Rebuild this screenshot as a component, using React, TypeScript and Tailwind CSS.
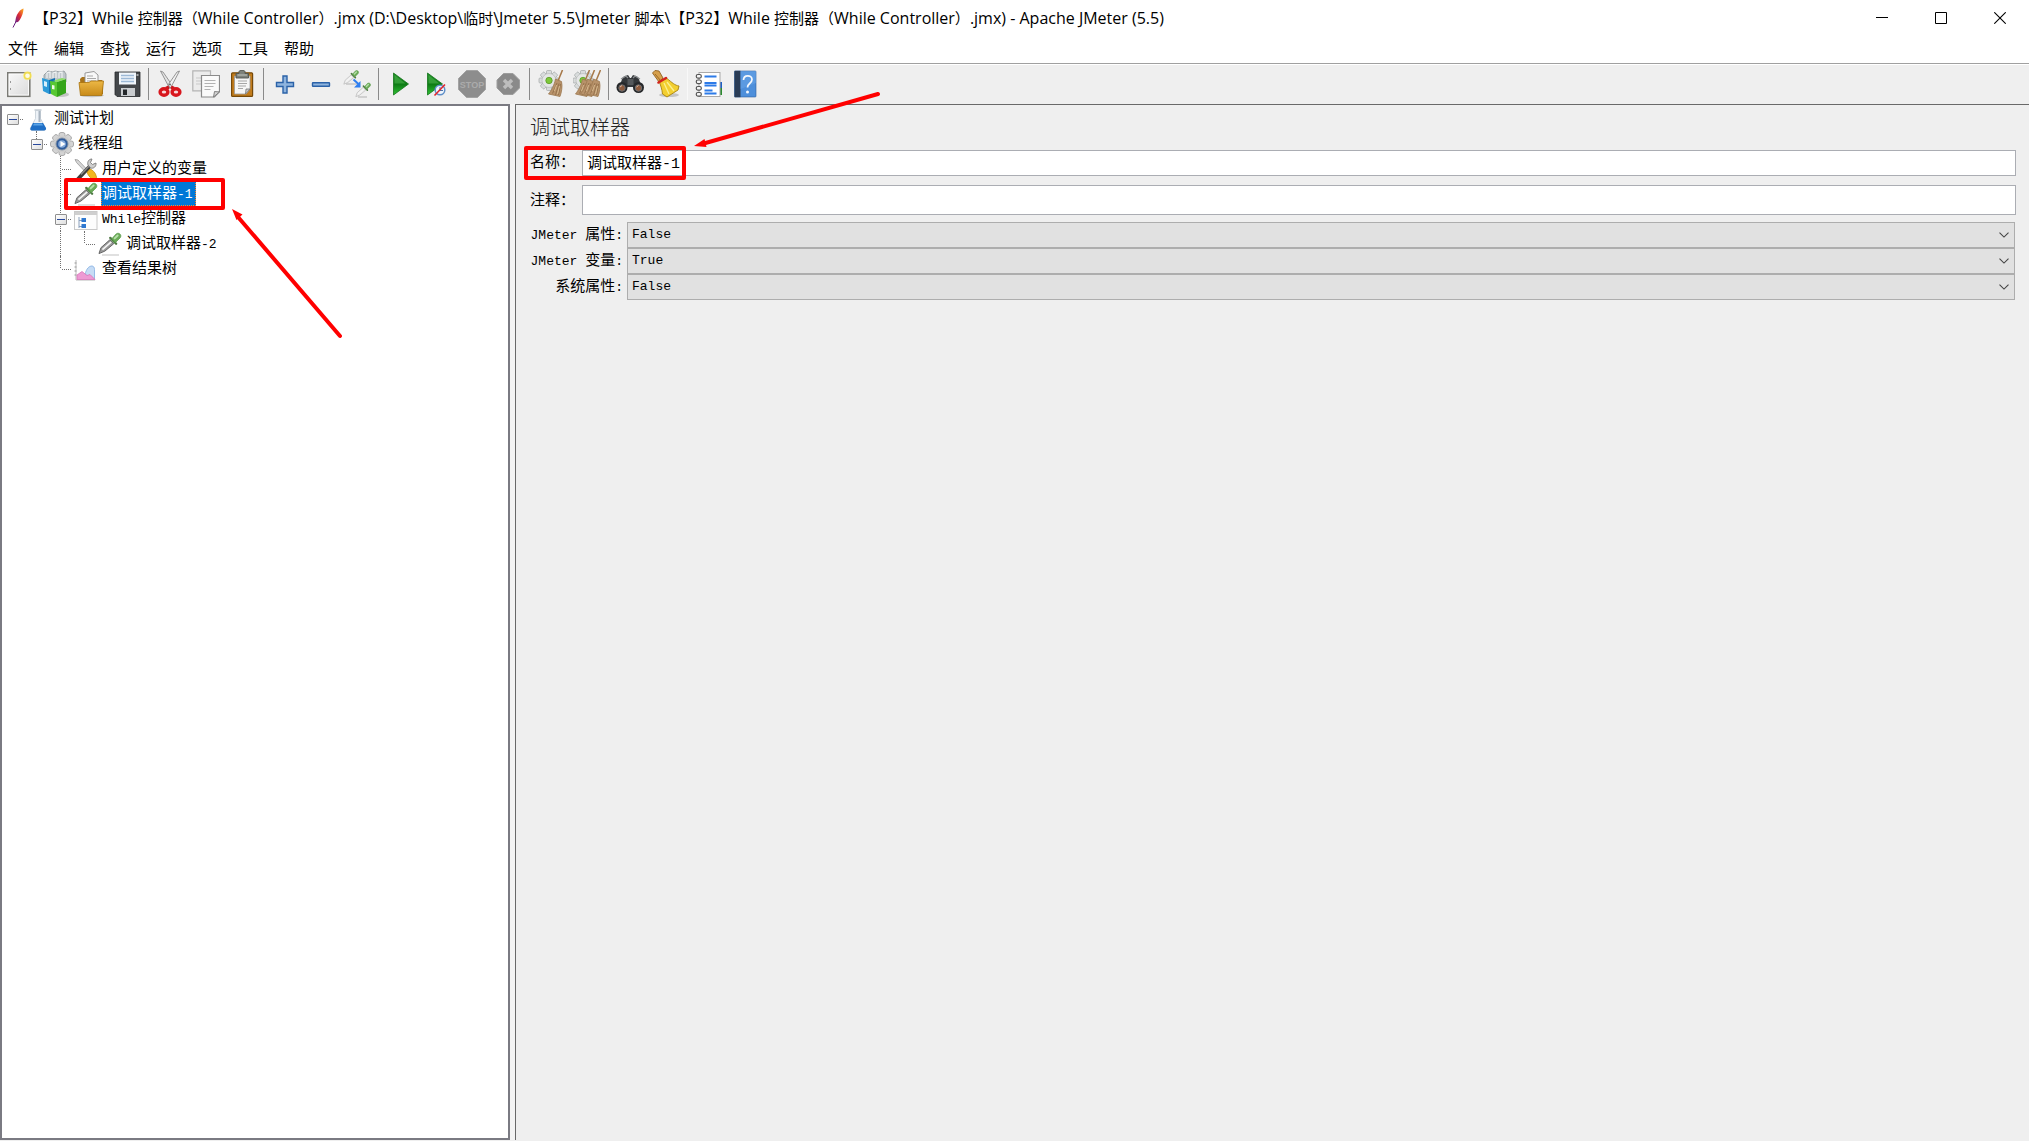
import { useState } from "react";
import type { ReactNode } from "react";

const UI_FONT = "font-['Open_Sans','Noto_Sans_CJK_SC',sans-serif]";
const SONG_FONT = "font-['Liberation_Mono','Noto_Sans_CJK_SC',monospace]";

/* Sets the half-width characters of a mixed string in a size of their own. */
function Mixed({ text, latin = "text-[13px]" }: { text: string; latin?: string }) {
  const parts = text.match(/[\x20-\x7e]+|[^\x20-\x7e]+/g) ?? [];
  return (
    <>
      {parts.map((p, i) =>
        /^[\x20-\x7e]/.test(p) ? (
          <span key={i} className={latin}>
            {p}
          </span>
        ) : (
          <span key={i}>{p}</span>
        ),
      )}
    </>
  );
}

function Icon({ children }: { children: ReactNode }) {
  return (
    <svg viewBox="0 0 28 28" className="size-7 shrink-0" aria-hidden="true">
      {children}
    </svg>
  );
}

const NewIcon = () => (
  <Icon>
    <rect x="2.8" y="2.8" width="22" height="23.5" fill="#e9e9e9" stroke="#7b7b76" strokeWidth="1.6" />
    <rect x="4" y="4" width="19.5" height="21" fill="url(#paper)" stroke="#fff" strokeWidth="0.8" />
    <path d="M5.5 11v2M5.5 18v2" stroke="#999" />
    <circle cx="22.5" cy="5.7" r="4.6" fill="#fbf3a0" opacity="0.55" />
    <circle cx="22.5" cy="5.7" r="3.1" fill="#fdfbe6" stroke="#f0dc50" strokeWidth="1.6" />
  </Icon>
);

const TemplatesIcon = () => (
  <Icon>
    <ellipse cx="20" cy="24.5" rx="8" ry="2.6" fill="#9a9a9a" opacity="0.5" />
    <path d="M3 5l4-4 5 1 2-1 5 1 4-1 2 3v8H3z" fill="#bfc6ca" stroke="#8b9499" strokeWidth="0.8" />
    <path d="M6 8V3l3-1v6M12 8V3l3-1v6M18 8V3l3-1v6" fill="none" stroke="#eef1f2" strokeWidth="1.2" />
    <path d="M1 8l7 2v14l-6-3z" fill="#2c9ad8" />
    <path d="M8 10l6-2v15l-6 1z" fill="#1170b4" />
    <path d="M3 11l3 1v5l-3-1z" fill="#d7effb" />
    <path d="M9 11l7 1v15l-6-3z" fill="#58c832" />
    <path d="M16 12l9-3v14l-9 4z" fill="#35a51a" />
    <path d="M16 12l9-3-4-1-9 3z" fill="#8be063" />
    <path d="M11 15l2.5.6v4L11 19z" fill="#f2fbe9" />
  </Icon>
);

const OpenIcon = () => (
  <Icon>
    <ellipse cx="15" cy="25.6" rx="12" ry="1.6" fill="#999" opacity="0.5" />
    <path d="M3 9l2-2h7l2 3h11l1 2v12H4z" fill="#a9741a" />
    <path d="M8 3l9-1.5 4 3.5v10H8z" fill="#f8f8f8" stroke="#8e8e8e" strokeWidth="0.9" />
    <path d="M10 6h6M10 8.5h9M10 11h9" stroke="#a9a9a9" />
    <path d="M2 12.5h10l2-1.5h12.500l-1.500 14.500H3.500z" fill="url(#gold)" stroke="#a8720c" strokeWidth="0.8" />
  </Icon>
);

const SaveIcon = () => (
  <Icon>
    <path d="M2 2h25v24.5H4L2 24.5z" fill="#44474a" stroke="#27292b" strokeWidth="0.8" />
    <rect x="6" y="2.5" width="17" height="12" fill="#f1f6fb" />
    <path d="M8 5.5h13M8 8.5h13M8 11.5h13" stroke="#9db9d6" strokeWidth="1.3" />
    <rect x="8" y="18" width="14" height="8" fill="#c9cccf" />
    <rect x="10" y="19.5" width="4" height="5.5" fill="#24272a" />
    <rect x="23.5" y="4" width="2" height="2" fill="#a4a7aa" />
  </Icon>
);

const CutIcon = () => (
  <Icon>
    <path d="M4.5 1L7 2l9 13-2.500 3z" fill="#e4e4e4" stroke="#8a8a8a" strokeWidth="0.9" />
    <path d="M23.500 1L21 2l-9 13 2.500 3z" fill="#f1f1f1" stroke="#8a8a8a" strokeWidth="0.9" />
    <circle cx="14" cy="14.5" r="1" fill="#666" />
    <path d="M13 17l-3 1.500M15 17l3 1.500" stroke="#c9171d" strokeWidth="3.500" />
    <ellipse cx="8" cy="22" rx="3.900" ry="3.200" fill="#f7d9da" stroke="#d8161d" strokeWidth="3.400" />
    <ellipse cx="20" cy="22" rx="3.900" ry="3.200" fill="#f7d9da" stroke="#d8161d" strokeWidth="3.400" />
  </Icon>
);

const CopyIcon = () => (
  <Icon>
    <path d="M.800.800h17.700v20H.800z" fill="#ececec" stroke="#b4b4b4" strokeWidth="1.2" />
    <path d="M4 8h5M4 11h5M4 14h5" stroke="#c9c9c9" />
    <path d="M9.500 5.500h18v16l-5 5.500h-13z" fill="#fafafa" stroke="#8a8a8a" strokeWidth="1.2" />
    <path d="M12.500 10.500h11M12.500 13.500h11M12.500 16.500h9M12.500 19.500h6" stroke="#b2b2b2" strokeWidth="1.2" />
    <path d="M21.500 27l1-5.500 5 .5z" fill="#d4d4d4" stroke="#777" strokeWidth="0.9" />
  </Icon>
);

const PasteIcon = () => (
  <Icon>
    <rect x="3.600" y="2.800" width="21" height="23.600" rx="1" fill="#c27c1c" stroke="#75490a" strokeWidth="1.2" />
    <path d="M6.500 6h15.500v13l-4 5H6.500z" fill="#f6f6f6" stroke="#9a9a9a" strokeWidth="0.8" />
    <path d="M10 11h9M10 13.500h9M10 16h8M10 18.500h5" stroke="#a6a6a6" strokeWidth="1.1" />
    <path d="M17.500 24l.5-5h4z" fill="#c9c9c9" stroke="#777" strokeWidth="0.8" />
    <path d="M8 3.500h3V1.500c0-1.500 6-1.500 6 0v2h3.500V8H8z" fill="#7d817b" stroke="#50534e" strokeWidth="0.9" />
    <path d="M9.500 5h9.500" stroke="#c2c5c0" />
  </Icon>
);

const PlusIcon = () => (
  <Icon>
    <path d="M12 6h4v6.500h6.500v4H16V23h-4v-6.500H5.500v-4H12z" fill="#8fb4de" stroke="#2b62a8" strokeWidth="1.4" />
  </Icon>
);

const MinusIcon = () => (
  <Icon>
    <rect x="5.500" y="12.700" width="17" height="3.600" rx="0.5" fill="#8fb4de" stroke="#2b62a8" strokeWidth="1.4" />
  </Icon>
);

type DropperProps = { x?: number; y?: number; s?: number; tube?: string; edge?: string };

function Dropper({ x = 0, y = 0, s = 1, tube = "#dcdcdc", edge = "#8b8b8b" }: DropperProps) {
  return (
    <g transform={`translate(${x} ${y}) scale(${s})`}>
      <path d="M.5 21.500L2.500 15.500 11.500 7.500l4 4L6.500 19z" fill={tube} stroke={edge} strokeWidth="1" />
      <path d="M4 17.500l9-8" stroke="#f4f4f4" strokeWidth="1.800" />
      <path d="M12 5.500l6 6" stroke="#4f7a44" strokeWidth="2.400" strokeLinecap="round" />
      <path d="M13.500 6.500l4.500-5c2.500-2.200 6.500 1 4 4L17 10.500z" fill="#6bab58" stroke="#5b9a4b" strokeWidth="0.8" />
      <path d="M16.500 6l3-3" stroke="#b5dfa8" strokeWidth="2" strokeLinecap="round" />
    </g>
  );
}

const ToggleIcon = () => (
  <Icon>
    <path d="M3 14h11M15 27h9" stroke="#c6c6c6" strokeWidth="1.5" />
    <Dropper x={0.500} y={0} s={0.66} tube="#ececec" edge="#b5b5b5" />
    <Dropper x={12.500} y={12.500} s={0.66} tube="#ececec" edge="#b5b5b5" />
    <path d="M10.500 9.500l5 4.500" stroke="#2f7ff0" strokeWidth="2" />
    <path d="M17.500 11v6.500H11z" fill="#2f7ff0" />
  </Icon>
);

const StartIcon = () => (
  <Icon>
    <path d="M7.500 3L22.500 14 7.500 25z" fill="url(#play)" stroke="#14751a" strokeWidth="0.8" />
    <path d="M8.500 5l11 8.500h-11z" fill="#5dc35d" opacity="0.45" />
  </Icon>
);

const StartNoPauseIcon = () => (
  <Icon>
    <path d="M5.500 3L20.500 14 5.500 25z" fill="url(#play)" stroke="#14751a" strokeWidth="0.8" />
    <path d="M6.500 5l11 8.500h-11z" fill="#5dc35d" opacity="0.45" />
    <circle cx="18" cy="20" r="4.800" fill="#eef4fb" stroke="#5f8fc8" strokeWidth="1.5" />
    <path d="M18 17v3.500h3" fill="none" stroke="#4775ad" />
    <path d="M12.500 25.500L23 14.500" stroke="#e0262c" strokeWidth="1.6" />
  </Icon>
);

const StopIcon = () => (
  <Icon>
    <path d="M8.500.5h11l8 8v11l-8 8h-11l-8-8v-11z" fill="#8d8d8d" stroke="#a3a3a3" />
    <text x="14" y="17.500" textAnchor="middle" fontSize="9" fontWeight="700" fontFamily="Liberation Sans, sans-serif" fill="#ababab">
      STOP
    </text>
  </Icon>
);

const ShutdownIcon = () => (
  <Icon>
    <path d="M9.500 3.500h9.500l6.500 6.500v8L19 24.500H9.500L3 18v-8z" fill="#8a8a8a" stroke="#9d9d9d" />
    <path d="M10 10l8 8M18 10l-8 8" stroke="#bdbdbd" strokeWidth="3.400" />
  </Icon>
);

const GEAR_TEETH = [0, 45, 90, 135, 180, 225, 270, 315];

const Gear = ({ cx, cy }: { cx: number; cy: number }) => (
  <g>
    {GEAR_TEETH.map((a) => (
      <rect
        key={a}
        x={cx - 2.500}
        y={cy - 10}
        width="5"
        height="5"
        rx="1"
        fill="#d9dcdc"
        stroke="#a3a8a8"
        strokeWidth="0.7"
        transform={`rotate(${a} ${cx} ${cy})`}
      />
    ))}
    <circle cx={cx} cy={cy} r="7" fill="#e4e6e6" stroke="#b2b6b6" strokeWidth="0.6" />
    <circle cx={cx} cy={cy} r="3.200" fill="#7dc83a" stroke="#5a9a26" strokeWidth="0.8" />
  </g>
);

const Broom = ({ x }: { x: number }) => (
  <g transform={`translate(${x} 0)`}>
    <path d="M12.500 0L8 11" stroke="#a67848" strokeWidth="1.5" />
    <path d="M5.500 9l6 2.500c1.200 5 0 11-1.500 15L-1.500 24c3-4 5.500-8 7-15z" fill="#b8926a" stroke="#9c7850" strokeWidth="0.8" />
    <path d="M7 13L2.500 23.500M9 13.500L5.500 25M10.500 14L8.500 25" stroke="#8d6b45" strokeWidth="0.8" />
    <path d="M6.500 15l-2 6M9.500 16l-2 8" stroke="#dcbf95" strokeWidth="0.9" />
  </g>
);

const ClearIcon = () => (
  <Icon>
    <Gear cx={12} cy={10.500} />
    <Broom x={13} />
  </Icon>
);

const ClearAllIcon = () => (
  <Icon>
    <Gear cx={10} cy={10.500} />
    <Broom x={4} />
    <Broom x={9} />
    <Broom x={15} />
  </Icon>
);

const SearchIcon = () => (
  <Icon>
    <path d="M7 7l5-2 2 3h1l2-3 5 2 4 10H3z" fill="#333639" />
    <path d="M5 9l5-3 2 2M24 9l-5-3-2 2" stroke="#8a8d90" strokeWidth="1.2" fill="none" />
    <rect x="11.500" y="9" width="6" height="6" fill="#55585b" />
    <circle cx="6" cy="17.500" r="5.500" fill="#26282a" />
    <circle cx="22.500" cy="17.500" r="5.500" fill="#26282a" />
    <circle cx="6" cy="18" r="3.200" fill="#8d5a3c" stroke="#6d7074" />
    <circle cx="22.500" cy="18" r="3.200" fill="#8d5a3c" stroke="#6d7074" />
    <path d="M4 17l2-1.500M20.500 17l2-1.500" stroke="#e0b79c" />
  </Icon>
);

const ResetSearchIcon = () => (
  <Icon>
    <ellipse cx="17" cy="25" rx="10" ry="2" fill="#999" opacity="0.5" />
    <path d="M.5 3L3 .5 7 1l4 7-4 4z" fill="#d6a04c" stroke="#916222" strokeWidth="0.9" />
    <path d="M3 4l6 7" stroke="#9a6a28" />
    <path d="M7 11l8-2.500c5 4 8 7 12 7.500l-1 4L15 27l-4.500-3C10 19 8.500 15 7 11z" fill="#f3cf30" stroke="#a8820e" strokeWidth="0.9" />
    <path d="M12 13l5 11M15 12l7 9" stroke="#fbf08e" strokeWidth="1.3" />
    <path d="M6.500 12.500L14 8" stroke="#d2251e" strokeWidth="2.600" strokeLinecap="round" />
  </Icon>
);

const FunctionHelperIcon = () => (
  <Icon>
    <path d="M25.500 12v6" stroke="#1d5fc4" strokeWidth="3" />
    <path d="M25.500 18v7" stroke="#2a8a2e" strokeWidth="3" />
    <rect x="4" y="2.500" width="21" height="24" fill="#fff" stroke="#a9a9a9" />
    {[4.5, 10, 16.5, 22.5].map((y) => (
      <rect key={y} x="1.300" y={y} width="5" height="3.600" rx="1.5" fill="#f4f4f4" stroke="#555" strokeWidth="1.2" />
    ))}
    <path d="M9.500 6.500h12M9.500 20.500h8" stroke="#2d7be8" strokeWidth="1.8" />
    <path d="M9.500 13h12M9.500 15.500h12M9.500 23.500h12" stroke="#2d7be8" strokeWidth="1.8" />
  </Icon>
);

const HelpIcon = () => (
  <Icon>
    <rect x="3.500" y="1" width="21.500" height="26" rx="0.8" fill="#4d8fdb" stroke="#2d5f9e" strokeWidth="0.6" />
    <path d="M3.500.800h6v26.400h-6z" fill="#2a3c55" />
    <path d="M9.500 1H25v12L9.500 19z" fill="#6aa6e8" opacity="0.5" />
    <path d="M12.500 10c0-5.500 8.500-5.500 8.500-.5 0 4-4.500 3.500-4.500 8" fill="none" stroke="#f4f8fd" strokeWidth="1.7" />
    <circle cx="16.500" cy="22" r="1.5" fill="#f4f8fd" />
  </Icon>
);

type Tool = { label: string; icon: ReactNode; disabled?: boolean };
const TOOL_GROUPS: Tool[][] = [
  [
    { label: "新建", icon: <NewIcon /> },
    { label: "模板", icon: <TemplatesIcon /> },
    { label: "打开", icon: <OpenIcon /> },
    { label: "保存", icon: <SaveIcon /> },
  ],
  [
    { label: "剪切", icon: <CutIcon /> },
    { label: "复制", icon: <CopyIcon /> },
    { label: "粘贴", icon: <PasteIcon /> },
  ],
  [
    { label: "全部展开", icon: <PlusIcon /> },
    { label: "全部折叠", icon: <MinusIcon /> },
    { label: "切换", icon: <ToggleIcon /> },
  ],
  [
    { label: "启动", icon: <StartIcon /> },
    { label: "不停顿启动", icon: <StartNoPauseIcon /> },
    { label: "停止", icon: <StopIcon />, disabled: true },
    { label: "关闭", icon: <ShutdownIcon />, disabled: true },
  ],
  [
    { label: "清除", icon: <ClearIcon /> },
    { label: "清除全部", icon: <ClearAllIcon /> },
  ],
  [
    { label: "查找", icon: <SearchIcon /> },
    { label: "重置搜索", icon: <ResetSearchIcon /> },
  ],
  [
    { label: "函数助手", icon: <FunctionHelperIcon /> },
    { label: "帮助", icon: <HelpIcon /> },
  ],
];

function TreeIcon({ children }: { children: ReactNode }) {
  return (
    <svg viewBox="0 0 24 25" className="h-[25px] w-6 shrink-0" aria-hidden="true">
      {children}
    </svg>
  );
}

const FlaskIcon = () => (
  <TreeIcon>
    <path d="M9.500 4.500h5v8l5 9.500c.5 1.500 0 2.500-1.500 2.500H6c-1.500 0-2-1-1.500-2.500l5-9.500z" fill="#edf2f7" stroke="#c3cbd4" strokeWidth="0.8" />
    <path d="M7 17h10l3 5c.3 1.500-.5 2.500-2 2.500H6c-1.500 0-2-1-1.500-2.500z" fill="#1f6fc6" />
    <path d="M8 17.500h8l1 2H7z" fill="#5aa3e6" />
    <path d="M8.500 4h7" stroke="#c5ccd4" strokeWidth="1.5" />
    <path d="M13.500 5v11" stroke="#a9b4c0" strokeWidth="2" />
  </TreeIcon>
);

const ThreadGroupIcon = () => (
  <TreeIcon>
    {GEAR_TEETH.map((a) => (
      <rect
        key={a}
        x="9"
        y="1.500"
        width="6"
        height="6"
        rx="2"
        fill="#d4d4d4"
        stroke="#9b9b9b"
        strokeWidth="0.8"
        transform={`rotate(${a} 12 13)`}
      />
    ))}
    <circle cx="12" cy="13" r="8.500" fill="#cdcdcd" />
    <circle cx="12" cy="13" r="6" fill="#2f5c9c" stroke="#7f8da0" strokeWidth="0.9" />
    <circle cx="12" cy="13" r="3.800" fill="#86aada" />
    <path d="M10.500 10l5 3-5 3z" fill="#fff" />
  </TreeIcon>
);

const ToolsIcon = () => (
  <TreeIcon>
    <path d="M1 3.500l3 .5 9 9.500-2 2L2.500 6.500z" fill="#d5d5d5" stroke="#999" strokeWidth="0.8" />
    <path d="M12.500 15l2.500-2.500c4 1.500 6.500 4 7.500 8.500 .5 2-2 4-4 2.500-3-2.500-5-5-6-8.500z" fill="#f2b71f" stroke="#c8930f" strokeWidth="0.8" />
    <path d="M4 23L16 10" stroke="#3e3e3e" strokeWidth="3.800" strokeLinecap="round" />
    <path d="M7 18.500L16 9" stroke="#8b8b8b" strokeWidth="1.4" />
    <path d="M14 9c-1-3.500 1-6 4-6l-1.500 3.500 2 2L22 7c.5 3.500-2.500 6-5.500 5z" fill="#cecece" stroke="#7a7a7a" strokeWidth="0.9" />
  </TreeIcon>
);

const SamplerIcon = () => (
  <TreeIcon>
    <path d="M4 24h17" stroke="#d6d6d6" strokeWidth="1.5" />
    <Dropper x={0.500} y={1.500} s={0.980} tube="#9a9a9a" edge="#636363" />
  </TreeIcon>
);

const ControllerIcon = () => (
  <TreeIcon>
    <rect x="0.500" y="5.500" width="22.500" height="18" fill="#fdfdfd" stroke="#c9c9c9" />
    <path d="M1 6h22v3H1z" fill="#cfcfcf" />
    <path d="M5 11v11M5 14.500h3M5 20.500h3" stroke="#8aa0bd" />
    <rect x="7.500" y="12" width="4.500" height="4" fill="#2f78d0" />
    <rect x="7.500" y="18" width="4.500" height="4" fill="#2f78d0" />
  </TreeIcon>
);

const ResultIcon = () => (
  <TreeIcon>
    <path d="M2 4v20M2 24h19" stroke="#b9b9b9" />
    <path d="M.5 7h2M.5 11h2M.5 15h2M.5 19h2" stroke="#999" />
    <path d="M11 18.500c1.500-6 4-8.500 7-8.500 1.500 0 2.500 1.500 2.500 3.500v9.500z" fill="#c6dcf5" stroke="#8db6e4" strokeWidth="0.9" />
    <path d="M3 23.500v-4.500l5-3.500 5 4 3-1 5 5z" fill="#ee9ad4" stroke="#d877ba" strokeWidth="0.8" />
  </TreeIcon>
);

/* For every column, whether the vertical branch line continues. */
type Guide = "none" | "full" | "top";
type TreeNode = {
  label: string;
  icon: ReactNode;
  guides: Guide[];
  expandable?: boolean;
  selected?: boolean;
};

const NODES: TreeNode[] = [
  { label: "测试计划", icon: <FlaskIcon />, guides: ["none"], expandable: true },
  { label: "线程组", icon: <ThreadGroupIcon />, guides: ["none", "top"], expandable: true },
  { label: "用户定义的变量", icon: <ToolsIcon />, guides: ["none", "none", "full"] },
  { label: "调试取样器-1", icon: <SamplerIcon />, guides: ["none", "none", "full"], selected: true },
  { label: "While控制器", icon: <ControllerIcon />, guides: ["none", "none", "full"], expandable: true },
  { label: "调试取样器-2", icon: <SamplerIcon />, guides: ["none", "none", "full", "top"] },
  { label: "查看结果树", icon: <ResultIcon />, guides: ["none", "none", "top"] },
];

function TreeRow({ node }: { node: TreeNode }) {
  const last = node.guides.length - 1;
  return (
    <li role="treeitem" aria-selected={!!node.selected} aria-level={node.guides.length} className="flex h-[25px] items-center">
      {node.guides.map((g, i) => (
        <span key={i} className="relative h-full w-6 shrink-0">
          {g === "full" && <span className="absolute top-0 left-2.5 h-full border-l border-dotted border-[#707070]" />}
          {g === "top" && <span className="absolute top-0 left-2.5 h-3 border-l border-dotted border-[#707070]" />}
          {i === last && <span className="absolute top-[13px] left-3 w-[9px] border-t border-dotted border-[#707070]" />}
          {i === last && node.expandable && (
            <button
              type="button"
              aria-label={`折叠 ${node.label}`}
              className="absolute top-2 left-[5px] flex h-[11px] w-3 items-center justify-center rounded-[1px] border border-[#8f8f8f] bg-gradient-to-br from-white to-[#dedede]"
            >
              <span className="h-px w-2 bg-[#28489c]" />
            </button>
          )}
        </span>
      ))}
      {node.icon}
      <span
        className={
          node.selected
            ? "ml-[3px] flex h-full items-center border border-dotted border-[#ff8728] bg-[#0078d7] pt-0.5 pr-0.5 text-white"
            : "ml-[3px] flex h-full items-center border border-transparent pt-0.5 pr-0.5"
        }
      >
        <span className="leading-5 whitespace-pre">
          <Mixed text={node.label} />
        </span>
      </span>
    </li>
  );
}

function SelectRow({ id, label, initial }: { id: string; label: string; initial: string }) {
  const [value, setValue] = useState(initial);
  return (
    <div className="flex h-[26px] items-center gap-1">
      <label htmlFor={id} className="w-[93px] shrink-0 pt-0.5 text-right leading-[22px] whitespace-pre">
        <Mixed text={label} />
      </label>
      <div className="relative h-full flex-1">
        <select
          id={id}
          value={value}
          onChange={(e) => setValue(e.target.value)}
          className="block h-full w-full appearance-none border border-[#adadad] bg-[#e1e1e1] px-1 text-[13px] text-black outline-none"
        >
          <option>True</option>
          <option>False</option>
        </select>
        <svg viewBox="0 0 10 6" className="pointer-events-none absolute top-2.5 right-1.5 h-1.5 w-2.5" aria-hidden="true">
          <path d="M.5.700L5 5.100 9.500.700" fill="none" stroke="#444" strokeWidth="1.1" />
        </svg>
      </div>
    </div>
  );
}

const MENUS = ["文件", "编辑", "查找", "运行", "选项", "工具", "帮助"];
const TITLE =
  "【P32】While 控制器（While Controller）.jmx (D:\\Desktop\\临时\\Jmeter 5.5\\Jmeter 脚本\\【P32】While 控制器（While Controller）.jmx) - Apache JMeter (5.5)";

export default function App() {
  const [name, setName] = useState("调试取样器-1");
  const [comment, setComment] = useState("");
  return (
    <div className={`relative flex h-screen flex-col overflow-hidden bg-white text-[15px] text-black ${SONG_FONT}`}>
      <svg className="absolute size-0" aria-hidden="true">
        <defs>
          <linearGradient id="paper" x1="0" y1="0" x2="1" y2="1">
            <stop offset="0" stopColor="#f7f7f7" />
            <stop offset="1" stopColor="#dcdcdc" />
          </linearGradient>
          <linearGradient id="gold" x1="0" y1="0" x2="0" y2="1">
            <stop offset="0" stopColor="#ecb846" />
            <stop offset="1" stopColor="#c88a18" />
          </linearGradient>
          <linearGradient id="play" x1="0" y1="0" x2="0" y2="1">
            <stop offset="0" stopColor="#1f8f27" />
            <stop offset="0.5" stopColor="#0d7a14" />
            <stop offset="1" stopColor="#2fc234" />
          </linearGradient>
          <linearGradient id="feather" x1="1" y1="0" x2="0" y2="1">
            <stop offset="0.1" stopColor="#f79a20" />
            <stop offset="0.5" stopColor="#dd2a35" />
            <stop offset="0.9" stopColor="#7a2380" />
          </linearGradient>
        </defs>
      </svg>

      <header className={`flex h-9 shrink-0 items-center ${UI_FONT}`}>
        <svg viewBox="0 0 12 20" className="ml-3 h-5 w-3 shrink-0" aria-hidden="true">
          <path d="M11.500.5c-3.500 1-6 4.500-7.500 9L3 14.500l3-.5C9 11 11.500 5 11.500.5z" fill="url(#feather)" />
          <path d="M4 13.500L1 19.500" stroke="#6a2380" />
        </svg>
        <h1 className="ml-2.5 flex-1 truncate text-[15px] leading-6 font-normal">
          <Mixed text={TITLE} latin="text-base leading-6" />
        </h1>
        <button type="button" aria-label="最小化" className="flex h-9 w-[59px] items-center justify-center">
          <svg viewBox="0 0 12 12" className="size-3">
            <path d="M0 5.500h12" stroke="#000" />
          </svg>
        </button>
        <button type="button" aria-label="最大化" className="flex h-9 w-[59px] items-center justify-center">
          <svg viewBox="0 0 12 12" className="size-3">
            <path d="M.5.5h11v11H.5z" stroke="#000" fill="none" />
          </svg>
        </button>
        <button type="button" aria-label="关闭窗口" className="flex h-9 w-[59px] items-center justify-center">
          <svg viewBox="0 0 12 12" className="size-3">
            <path d="M.3.3l11.400 11.400M11.700.3L.3 11.700" stroke="#000" strokeWidth="1.1" />
          </svg>
        </button>
      </header>

      <nav className={`flex h-7 shrink-0 items-start border-b border-[#a0a0a0] ${UI_FONT}`}>
        {MENUS.map((m) => (
          <button key={m} type="button" className="px-2 leading-6">
            {m}
          </button>
        ))}
      </nav>

      <div role="toolbar" className="mt-px flex h-[39px] shrink-0 items-start bg-[#efefef] pt-px pl-px">
        {TOOL_GROUPS.map((group, gi) => (
          <div key={gi} className="flex items-center">
            {gi > 0 && (
              <span className="flex w-[7px] justify-center">
                <span className={gi === TOOL_GROUPS.length - 1 ? "h-8 w-px bg-[#f8f8f8]" : "h-8 w-px bg-[#8a8a8a]"} />
              </span>
            )}
            {group.map((t) => (
              <button
                key={t.label}
                type="button"
                title={t.label}
                aria-label={t.label}
                disabled={t.disabled}
                className="flex h-9 w-9 items-center justify-center"
              >
                {t.icon}
              </button>
            ))}
          </div>
        ))}
      </div>

      <div className="flex min-h-0 flex-1 bg-[#efefef] pb-px">
        <aside className="w-[510px] shrink-0 border-2 border-[#7a7a82] bg-white">
          <ul role="tree">
            {NODES.map((n) => (
              <TreeRow key={n.label} node={n} />
            ))}
          </ul>
        </aside>
        <div className="w-[5px] shrink-0 bg-[#f4f4f4]" />
        <main className="min-w-0 flex-1 border-t border-l border-[#696969] pr-[13px] pl-3.5">
          <h2 className="pt-2.5 text-[20px] leading-[30px] font-light text-[#222]">调试取样器</h2>
          <div className="mt-[5px] flex h-[26px] items-center">
            <label htmlFor="name" className="w-[52px] shrink-0 pt-0.5 leading-[22px]">
              名称：
            </label>
            <input
              id="name"
              value={name}
              onChange={(e) => setName(e.target.value)}
              className="h-full min-w-0 flex-1 border border-[#abadb3] bg-white px-1 pb-0.5 outline-none"
            />
          </div>
          <div className="mt-[9px] flex h-[30px] items-center">
            <label htmlFor="comment" className="w-[52px] shrink-0 pt-1 leading-[22px]">
              注释：
            </label>
            <input
              id="comment"
              value={comment}
              onChange={(e) => setComment(e.target.value)}
              className="h-full min-w-0 flex-1 border border-[#abadb3] bg-white px-1 outline-none"
            />
          </div>
          <div className="mt-[7px] mr-px">
            <SelectRow id="jmeter-properties" label="JMeter 属性:" initial="False" />
            <SelectRow id="jmeter-variables" label="JMeter 变量:" initial="True" />
            <SelectRow id="system-properties" label="系统属性:" initial="False" />
          </div>
        </main>
      </div>

      <svg className="pointer-events-none absolute inset-0 size-full" fill="none" stroke="#ff0000" aria-hidden="true">
        <rect x="66" y="180" width="157" height="28" strokeWidth="4" strokeLinejoin="round" />
        <rect x="526" y="148" width="158" height="30" strokeWidth="4" strokeLinejoin="round" />
        <path d="M878 94L702 144" strokeWidth="4" strokeLinecap="round" />
        <path d="M694 146l10.500-7 2 8z" fill="#ff0000" stroke="none" />
        <path d="M340 336L238 217" strokeWidth="4" strokeLinecap="round" />
        <path d="M232 209l10.500 5.500-6 5.500z" fill="#ff0000" stroke="none" />
      </svg>
    </div>
  );
}
